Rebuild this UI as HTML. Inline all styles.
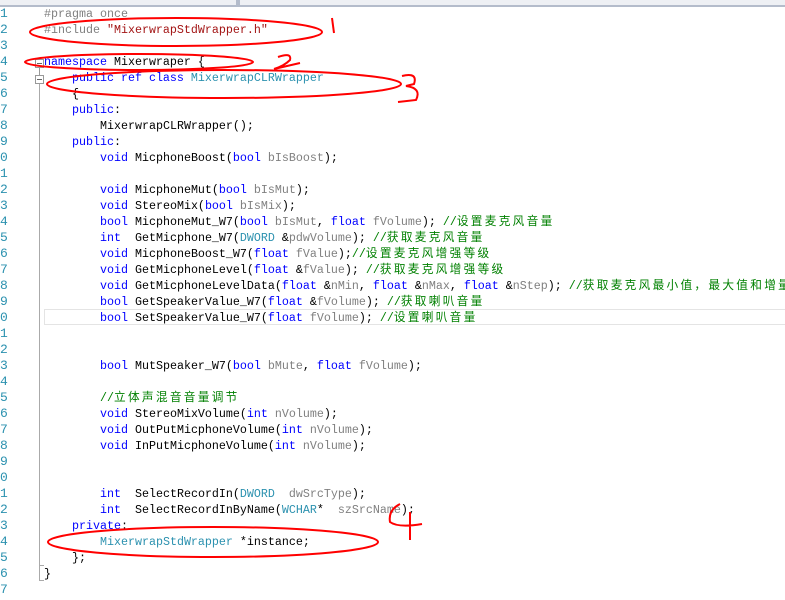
<!DOCTYPE html>
<html><head><meta charset="utf-8"><style>
body{margin:0;width:785px;height:600px;background:#fff;overflow:hidden;position:relative;font-family:"Liberation Mono","Noto Sans CJK SC",monospace;font-size:11.67px}
.l{position:absolute;white-space:pre;height:16px;line-height:16px}
.n{position:absolute;left:0;color:#2b91af;line-height:16px;font-size:13px}
.k{color:#0000ff}.t{color:#2b91af}.p{color:#808080}.c{color:#008000}.s{color:#a31515}.pp{color:#808080}
.z{letter-spacing:2.3px}
</style></head><body>
<div style="position:absolute;left:0;top:0;width:785px;height:5px;background:#eef0f4;border-bottom:2px solid #b4bccb"></div>
<div style="position:absolute;left:236px;top:0;width:4px;height:5px;background:#b4bccb"></div>
<div style="position:absolute;left:44px;top:309px;width:741px;height:14px;border:1px solid #e4e4e4"></div>
<div style="position:absolute;left:35px;top:59px;width:7px;height:7px;border:1px solid #999;background:#fff"></div>
<div style="position:absolute;left:37px;top:63px;width:5px;height:1px;background:#666"></div>
<div style="position:absolute;left:35px;top:75px;width:7px;height:7px;border:1px solid #999;background:#fff"></div>
<div style="position:absolute;left:37px;top:79px;width:5px;height:1px;background:#666"></div>
<div style="position:absolute;left:39px;top:68px;width:1px;height:7px;background:#999"></div>
<div style="position:absolute;left:39px;top:84px;width:1px;height:497px;background:#aaa"></div>
<div style="position:absolute;left:39px;top:580px;width:5px;height:1px;background:#aaa"></div>
<div style="position:absolute;left:39px;top:565px;width:5px;height:1px;background:#aaa"></div>

<div class="n" style="top:6px">1</div><div class="n" style="top:22px">2</div><div class="n" style="top:38px">3</div><div class="n" style="top:54px">4</div><div class="n" style="top:70px">5</div><div class="n" style="top:86px">6</div><div class="n" style="top:102px">7</div><div class="n" style="top:118px">8</div><div class="n" style="top:134px">9</div><div class="n" style="top:150px">0</div><div class="n" style="top:166px">1</div><div class="n" style="top:182px">2</div><div class="n" style="top:198px">3</div><div class="n" style="top:214px">4</div><div class="n" style="top:230px">5</div><div class="n" style="top:246px">6</div><div class="n" style="top:262px">7</div><div class="n" style="top:278px">8</div><div class="n" style="top:294px">9</div><div class="n" style="top:310px">0</div><div class="n" style="top:326px">1</div><div class="n" style="top:342px">2</div><div class="n" style="top:358px">3</div><div class="n" style="top:374px">4</div><div class="n" style="top:390px">5</div><div class="n" style="top:406px">6</div><div class="n" style="top:422px">7</div><div class="n" style="top:438px">8</div><div class="n" style="top:454px">9</div><div class="n" style="top:470px">0</div><div class="n" style="top:486px">1</div><div class="n" style="top:502px">2</div><div class="n" style="top:518px">3</div><div class="n" style="top:534px">4</div><div class="n" style="top:550px">5</div><div class="n" style="top:566px">6</div><div class="n" style="top:582px">7</div>

<div class="l pp" style="left:44px;top:6px">#pragma once</div>
<div class="l" style="left:44px;top:22px"><span class="pp">#include </span><span class="s">"MixerwrapStdWrapper.h"</span></div>
<div class="l" style="left:44px;top:54px"><span class="k">namespace</span> Mixerwraper {</div>
<div class="l" style="left:72px;top:70px"><span class="k">public ref class</span> <span class="t">MixerwrapCLRWrapper</span></div>
<div class="l" style="left:72px;top:86px">{</div>
<div class="l" style="left:72px;top:102px"><span class="k">public</span>:</div>
<div class="l" style="left:100px;top:118px">MixerwrapCLRWrapper();</div>
<div class="l" style="left:72px;top:134px"><span class="k">public</span>:</div>
<div class="l" style="left:100px;top:150px"><span class="k">void</span> MicphoneBoost(<span class="k">bool</span> <span class="p">bIsBoost</span>);</div>
<div class="l" style="left:100px;top:182px"><span class="k">void</span> MicphoneMut(<span class="k">bool</span> <span class="p">bIsMut</span>);</div>
<div class="l" style="left:100px;top:198px"><span class="k">void</span> StereoMix(<span class="k">bool</span> <span class="p">bIsMix</span>);</div>
<div class="l" style="left:100px;top:214px"><span class="k">bool</span> MicphoneMut_W7(<span class="k">bool</span> <span class="p">bIsMut</span>, <span class="k">float</span> <span class="p">fVolume</span>); <span class="c">//<span class="z">设置麦克风音量</span></span></div>
<div class="l" style="left:100px;top:230px"><span class="k">int</span>  GetMicphone_W7(<span class="t">DWORD</span> &amp;<span class="p">pdwVolume</span>); <span class="c">//<span class="z">获取麦克风音量</span></span></div>
<div class="l" style="left:100px;top:246px"><span class="k">void</span> MicphoneBoost_W7(<span class="k">float</span> <span class="p">fValue</span>);<span class="c">//<span class="z">设置麦克风增强等级</span></span></div>
<div class="l" style="left:100px;top:262px"><span class="k">void</span> GetMicphoneLevel(<span class="k">float</span> &amp;<span class="p">fValue</span>); <span class="c">//<span class="z">获取麦克风增强等级</span></span></div>
<div class="l" style="left:100px;top:278px"><span class="k">void</span> GetMicphoneLevelData(<span class="k">float</span> &amp;<span class="p">nMin</span>, <span class="k">float</span> &amp;<span class="p">nMax</span>, <span class="k">float</span> &amp;<span class="p">nStep</span>); <span class="c">//<span class="z">获取麦克风最小值，最大值和增量</span></span></div>
<div class="l" style="left:100px;top:294px"><span class="k">bool</span> GetSpeakerValue_W7(<span class="k">float</span> &amp;<span class="p">fVolume</span>); <span class="c">//<span class="z">获取喇叭音量</span></span></div>
<div class="l" style="left:100px;top:310px"><span class="k">bool</span> SetSpeakerValue_W7(<span class="k">float</span> <span class="p">fVolume</span>); <span class="c">//<span class="z">设置喇叭音量</span></span></div>
<div class="l" style="left:100px;top:358px"><span class="k">bool</span> MutSpeaker_W7(<span class="k">bool</span> <span class="p">bMute</span>, <span class="k">float</span> <span class="p">fVolume</span>);</div>
<div class="l c" style="left:100px;top:390px">//<span class="z">立体声混音音量调节</span></div>
<div class="l" style="left:100px;top:406px"><span class="k">void</span> StereoMixVolume(<span class="k">int</span> <span class="p">nVolume</span>);</div>
<div class="l" style="left:100px;top:422px"><span class="k">void</span> OutPutMicphoneVolume(<span class="k">int</span> <span class="p">nVolume</span>);</div>
<div class="l" style="left:100px;top:438px"><span class="k">void</span> InPutMicphoneVolume(<span class="k">int</span> <span class="p">nVolume</span>);</div>
<div class="l" style="left:100px;top:486px"><span class="k">int</span>  SelectRecordIn(<span class="t">DWORD</span>  <span class="p">dwSrcType</span>);</div>
<div class="l" style="left:100px;top:502px"><span class="k">int</span>  SelectRecordInByName(<span class="t">WCHAR</span>*  <span class="p">szSrcName</span>);</div>
<div class="l" style="left:72px;top:518px"><span class="k">private</span>:</div>
<div class="l" style="left:100px;top:534px"><span class="t">MixerwrapStdWrapper</span> *instance;</div>
<div class="l" style="left:72px;top:550px">};</div>
<div class="l" style="left:44px;top:566px">}</div>

<svg width="785" height="600" style="position:absolute;left:0;top:0" fill="none" stroke="#f00" stroke-width="2">
<ellipse cx="176" cy="32" rx="146" ry="14"/>
<ellipse cx="139" cy="62" rx="114" ry="8"/>
<ellipse cx="224" cy="84" rx="177" ry="14"/>
<ellipse cx="213" cy="542" rx="165" ry="15"/>
<path d="M332 18 L334 33"/>
<path d="M278 57 Q292 52 290 60 Q284 66 274 69 L300 63"/>
<path d="M402 76 Q418 72 414 84 L406 86 Q422 88 416 100 L398 102"/>
<path d="M400 504 Q388 510 390 522 Q398 528 422 524 M410 512 L410 540"/>
</svg>
</body></html>
